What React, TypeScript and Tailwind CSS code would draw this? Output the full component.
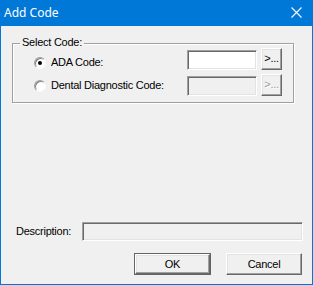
const sunkenWhite =
  "bg-white border border-t-[#a0a0a0] border-l-[#a0a0a0] border-r-white border-b-white shadow-[inset_1px_1px_0_#696969,inset_-1px_-1px_0_#e3e3e3]";
const sunkenGray =
  "bg-[#f0f0f0] border border-t-[#a0a0a0] border-l-[#a0a0a0] border-r-white border-b-white shadow-[inset_1px_1px_0_#696969,inset_-1px_-1px_0_#e3e3e3]";
const raised =
  "bg-[#f0f0f0] border border-t-white border-l-white border-r-[#696969] border-b-[#696969] shadow-[inset_-1px_-1px_0_#a0a0a0,inset_1px_1px_0_#e3e3e3]";

const Radio = ({ checked, label }: { checked?: boolean; label: string }) => (
  <div className="flex items-center h-[13px]">
    <div className="w-[12px] h-[12px] rounded-full bg-white border border-t-[#a0a0a0] border-l-[#a0a0a0] border-r-[#f8f8f8] border-b-[#f8f8f8] shadow-[inset_1px_1px_0_#808080] flex items-center justify-center">
      {checked && <div className="w-[4px] h-[4px] rounded-full bg-black" />}
    </div>
    <span className="ml-[5px] leading-[13px]">{label}</span>
  </div>
);

const App = () => {
  return (
    <div
      className="w-[313px] h-[285px] bg-[#0078d7] px-[1px] pb-[1px] flex flex-col text-[11px] tracking-[-0.25px] text-black"
      style={{ fontFamily: '"Liberation Sans", Arial, sans-serif' }}
    >
      {/* Title bar */}
      <div className="h-[26px] flex items-center justify-between pl-[3px] pr-[10px]">
        <span
          className="text-white text-[12px] leading-[16px] mt-[-1px] tracking-normal"
          style={{ fontFamily: '"Noto Sans", "Open Sans", sans-serif' }}
        >
          Add Code
        </span>
        <svg width="11" height="11" viewBox="0 0 11 11" className="mt-[-1px]">
          <path d="M0.5 0.5 L10.5 10.5 M10.5 0.5 L0.5 10.5" stroke="#fff" strokeWidth="1.1" />
        </svg>
      </div>

      {/* Client area */}
      <div className="flex-1 bg-[#f0f0f0] flex flex-col">
        {/* Group box */}
        <div className="relative mt-[17px] ml-[11px] w-[282px] h-[60px] border border-[#a0a0a0] shadow-[inset_1px_1px_0_#fff,1px_1px_0_#fff] flex justify-between">
          <span className="absolute left-[7px] top-[-8px] px-[2px] bg-[#f0f0f0] leading-[13px]">
            Select Code:
          </span>

          <div className="flex flex-col gap-[10px] pl-[21px] pt-[12px]">
            <Radio checked label="ADA Code:" />
            <Radio label="Dental Diagnostic Code:" />
          </div>

          <div className="flex flex-col gap-[4px] pr-[11px] pt-[4px]">
            <div className="flex items-start gap-[4px]">
              <div className={`mt-[2px] w-[70px] h-[20px] ${sunkenWhite}`} />
              <div className={`w-[21px] h-[22px] flex items-center justify-center leading-none pb-[2px] ${raised}`}>
                &gt;...
              </div>
            </div>
            <div className="flex items-start gap-[4px]">
              <div className={`mt-[2px] w-[70px] h-[20px] ${sunkenGray}`} />
              <div
                className={`w-[21px] h-[22px] flex items-center justify-center leading-none pb-[2px] text-[#a0a0a0] [text-shadow:1px_1px_0_#fff] ${raised}`}
              >
                &gt;...
              </div>
            </div>
          </div>
        </div>

        {/* Description */}
        <div className="flex items-center mt-[119px] pl-[15px]">
          <span className="w-[66px]">Description:</span>
          <div className={`w-[221px] h-[19px] ${sunkenGray}`} />
        </div>

        {/* Buttons */}
        <div className="flex justify-end gap-[15px] mt-[12px] pr-[10px]">
          <div className="w-[77px] h-[22px] border border-[#646464]">
            <div className={`w-full h-full flex items-center justify-center ${raised}`}>OK</div>
          </div>
          <div className={`w-[76px] h-[22px] flex items-center justify-center ${raised}`}>Cancel</div>
        </div>
      </div>
    </div>
  );
};

export default App;
